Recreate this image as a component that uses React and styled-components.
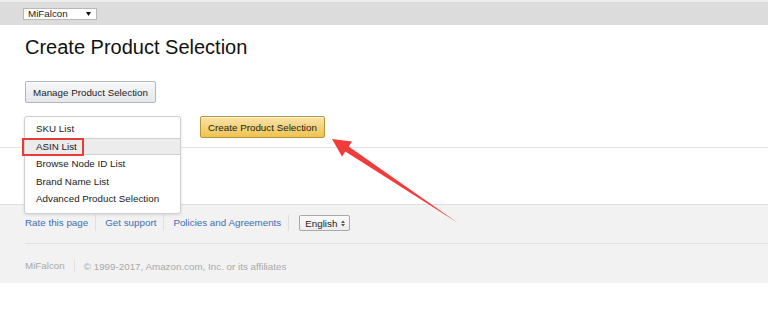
import React from "react";
import styled, { createGlobalStyle } from "styled-components";

const Global = createGlobalStyle`
  html, body { margin: 0; padding: 0; background: #fff; }
  body { font-family: "Liberation Sans", Arial, sans-serif; font-size: 9.8px; color: #333; }
  #root { position: relative; min-height: 318px; }
`;

const TopBar = styled.div`
  height: 23px;
  border-top: 2px solid #ededed;
  background: #dcdcdc;
  display: flex;
  align-items: center;
  padding-left: 23px;
`;

const MiniSelect = styled.div`
  width: 74px;
  height: 12px;
  box-sizing: border-box;
  background: #fff;
  border: 1px solid #b9b9b9;
  display: flex;
  align-items: center;
  justify-content: space-between;
  padding: 0 5px 0 4px;
  font-size: 9.8px;
  color: #222;
  line-height: 1;
`;

const Main = styled.div`
  padding: 0 0 0 25px;
`;

const Title = styled.h1`
  margin: 11px 0 0;
  font-weight: normal;
  font-size: 20px;
  line-height: 23px;
  color: #111;
`;

const Button = styled.div`
  display: inline-flex;
  align-items: center;
  justify-content: center;
  box-sizing: border-box;
  height: 22px;
  width: ${(p) => p.$w}px;
  border-radius: 2px;
  border: 1px solid ${(p) => (p.$primary ? "#b7963a" : "#b3b5b9")};
  background: ${(p) =>
    p.$primary
      ? "linear-gradient(#f8e3a9, #efc350)"
      : "linear-gradient(#f7f8fa, #e5e7ea)"};
  color: #222;
  font-size: 9.8px;
  box-shadow: 0 1px 0 rgba(255,255,255,0.6) inset;
`;

const ManageRow = styled.div`
  margin-top: 22px;
  display: flex;
`;

const ActionRow = styled.div`
  margin-top: 13px;
  display: flex;
  align-items: flex-start;
  gap: 19px;
  margin-left: -1px;
`;

const MenuAnchor = styled.div`
  position: relative;
  width: 157px;
  height: 22px;
  z-index: 2;
`;

const Menu = styled.div`
  position: absolute;
  left: 0;
  top: 0;
  width: 157px;
  box-sizing: border-box;
  background: #fff;
  border: 1px solid #cfcfcf;
  border-radius: 3px;
  box-shadow: 0 1px 3px rgba(0,0,0,0.12);
  padding: 3px 0 5px;
`;

const MenuItem = styled.div`
  height: 17.5px;
  box-sizing: border-box;
  display: flex;
  align-items: center;
  padding-left: 11px;
  color: #222;
  font-size: 9.8px;
  background: ${(p) => (p.$active ? "#ececec" : "transparent")};
  border-top: 1px solid ${(p) => (p.$active ? "#cfcfcf" : "transparent")};
  border-bottom: 1px solid ${(p) => (p.$active ? "#cfcfcf" : "transparent")};
`;

const RedBox = styled.div`
  position: absolute;
  left: -3px;
  top: 21px;
  width: 62px;
  height: 18px;
  box-sizing: border-box;
  border: 2px solid #ea3b3b;
`;

const Rule = styled.div`
  margin-top: 9px;
  height: 1px;
  background: #e3e3e3;
`;

const Footer = styled.div`
  margin-top: 56px;
  border-top: 1px solid #dedede;
  background: #f2f2f2;
  padding-left: 25px;
  display: flex;
  flex-direction: column;
`;

const LinkRow = styled.div`
  display: flex;
  align-items: center;
  height: 39px;
  border-bottom: 1px solid #e2e2e2;
  padding-bottom: 2px;
  box-sizing: border-box;
`;

const FootLink = styled.span`
  color: #3a6fb4;
  font-size: 9.8px;
  padding: 0 7px 0 ${(p) => (p.$first ? 0 : 9)}px;
  border-right: 1px solid #e0e0e0;
  line-height: 16px;
`;

const LangSelect = styled.div`
  margin-left: 10px;
  width: 51px;
  height: 16px;
  box-sizing: border-box;
  border: 1px solid #a9a9a9;
  border-radius: 2px;
  background: linear-gradient(#fbfbfb, #ececec);
  display: flex;
  align-items: center;
  justify-content: space-between;
  padding: 0 4px 0 5px;
  color: #222;
  font-size: 9.8px;
`;

const CopyRow = styled.div`
  display: flex;
  align-items: center;
  height: 39px;
  box-sizing: border-box;
  padding-top: 5px;
  color: #a9a9a9;
  font-size: 9.8px;
`;

const CopySep = styled.span`
  padding-right: 9px;
  margin-right: 9px;
  border-right: 1px solid #e2e2e2;
  line-height: 14px;
`;

const ArrowLayer = styled.svg`
  position: absolute;
  left: 0;
  top: 0;
  pointer-events: none;
  z-index: 3;
`;

export default function App() {
  const items = [
    "SKU List",
    "ASIN List",
    "Browse Node ID List",
    "Brand Name List",
    "Advanced Product Selection",
  ];
  return (
    <>
      <Global />
      <TopBar>
        <MiniSelect>
          <span>MiFalcon</span>
          <svg width="5" height="4" viewBox="0 0 5 4">
            <path d="M0 0 H5 L2.5 4 Z" fill="#111" />
          </svg>
        </MiniSelect>
      </TopBar>
      <Main>
        <Title>Create Product Selection</Title>
        <ManageRow>
          <Button $w={131}>Manage Product Selection</Button>
        </ManageRow>
        <ActionRow>
          <MenuAnchor>
            <Menu>
              {items.map((t, i) => (
                <MenuItem key={t} $active={i === 1}>
                  {t}
                </MenuItem>
              ))}
              <RedBox />
            </Menu>
          </MenuAnchor>
          <Button $primary $w={125}>Create Product Selection</Button>
        </ActionRow>
      </Main>
      <Rule />
      <Footer>
        <LinkRow>
          <FootLink $first>Rate this page</FootLink>
          <FootLink>Get support</FootLink>
          <FootLink>Policies and Agreements</FootLink>
          <LangSelect>
            <span>English</span>
            <svg width="4" height="7" viewBox="0 0 4 7">
              <path d="M0 3 L2 0.5 L4 3 Z M0 4 L2 6.5 L4 4 Z" fill="#555" />
            </svg>
          </LangSelect>
        </LinkRow>
        <CopyRow>
          <CopySep>MiFalcon</CopySep>
          <span>© 1999-2017, Amazon.com, Inc. or its affiliates</span>
        </CopyRow>
      </Footer>
      <ArrowLayer width="768" height="318" viewBox="0 0 768 318">
        <polygon
          points="332,139 352,141.5 348.7,146.5 458,223 345.3,151.5 342,156.5"
          fill="#f23b3b"
        />
      </ArrowLayer>
    </>
  );
}
